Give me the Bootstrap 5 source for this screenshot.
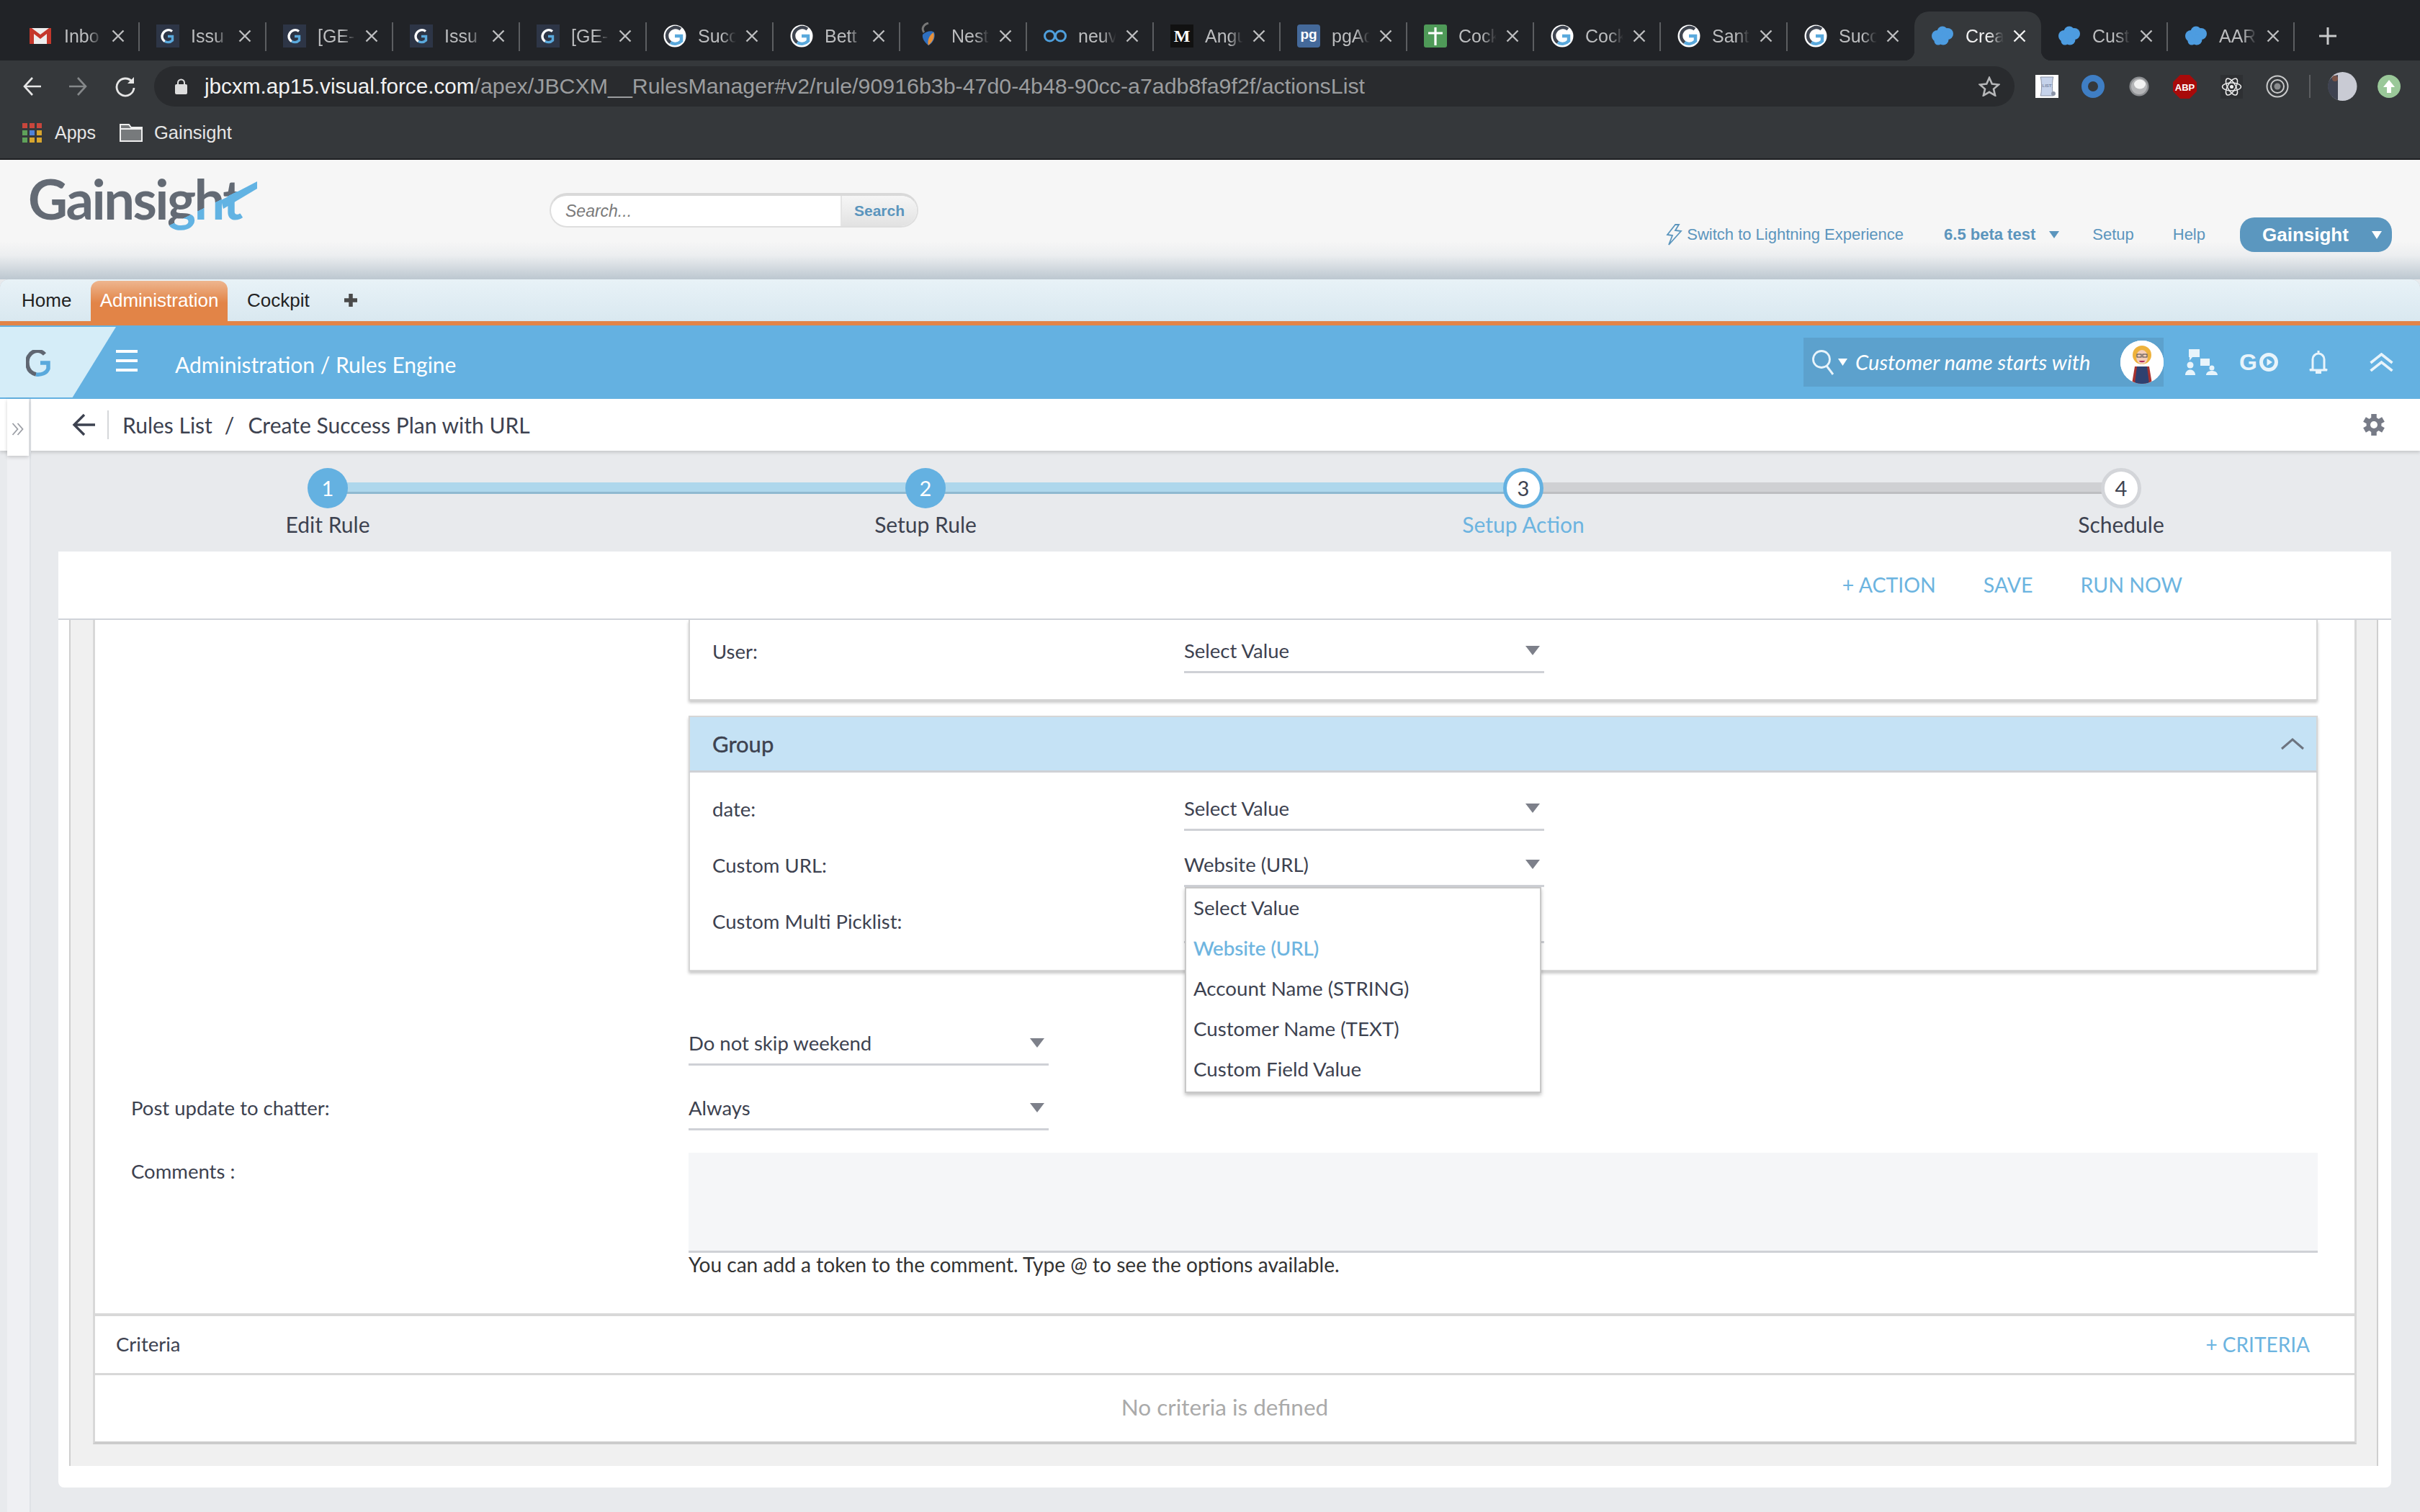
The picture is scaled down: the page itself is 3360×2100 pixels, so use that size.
<!DOCTYPE html>
<html lang="en">
<head>
<meta charset="utf-8">
<title>Create Success Plan with URL</title>
<link href="https://cdn.jsdelivr.net/npm/bootstrap@5.3.0/dist/css/bootstrap.min.css" rel="stylesheet">
<style>
html,body{margin:0;background:#e8eaed;}
body{width:3360px;height:2100px;overflow:hidden;font-family:Lato,"Liberation Sans",sans-serif;color:#3d4250;font-size:27.5px;line-height:36px;}
svg{display:block;flex:none;}
/* browser chrome */
.gs-tabs{height:84px;background:#212327;padding-left:18px;font-family:"Liberation Sans",sans-serif;}
.gs-tab{width:176px;height:68px;margin-top:16px;padding-left:23px;position:relative;color:#bcbdbf;font-size:25px;}
.gs-tab::after{content:"";position:absolute;right:0;top:15px;height:40px;width:2px;background:#5c5e61;}
.gs-tab.gs-nosep::after{display:none;}
.gs-tab.gs-active{background:#35383b;border-radius:20px 20px 0 0;color:#f1f1f1;}
.gs-tab.gs-active::before,.gs-tab.gs-active::after{content:"";display:block;position:absolute;top:auto;bottom:0;width:14px;height:14px;}
.gs-tab.gs-active::before{left:-14px;background:radial-gradient(circle at 0 0,transparent 14px,#35383b 14.5px);}
.gs-tab.gs-active::after{right:-14px;background:radial-gradient(circle at 100% 0,transparent 14px,#35383b 14.5px);}
.gs-tabtext{width:60px;margin-left:16px;white-space:nowrap;-webkit-mask-image:linear-gradient(90deg,#000 55%,transparent 88%);mask-image:linear-gradient(90deg,#000 55%,transparent 88%);}
.gs-tabx{margin-left:auto;margin-right:21px;}
.gs-plus{margin-left:33px;margin-top:16px;height:68px;}
.gs-tool{height:138px;background:#35383b;border-bottom:2px solid #1f2123;font-family:"Liberation Sans",sans-serif;}
.gs-navrow{height:64px;padding-top:8px;padding-left:32px;}
.gs-addr{position:absolute;left:214px;top:92px;width:2583px;height:56px;border-radius:28px;background:#292b2e;}
.gs-url{color:#9b9d9f;font-size:30.35px;white-space:nowrap;margin-left:24px;}
.gs-url b{font-weight:400;color:#f2f2f2;font-size:29.7px;}
.gs-bmarks{height:72px;padding-left:31px;color:#e6e6e6;font-size:25px;}
/* salesforce header */
.gs-head{height:166px;background:linear-gradient(#f6f6f6 68%,#eceef0 80%,#bcc7d0);padding:26px 39px 0;font-family:"Liberation Sans",sans-serif;}
.gs-logo{width:318px;height:72px;position:relative;font-family:Lato,"Liberation Sans",sans-serif;font-weight:700;font-size:76px;line-height:55px;letter-spacing:-2.6px;white-space:nowrap;color:transparent;background:linear-gradient(153.43deg,#636a74 70.6%,#62b3e3 70.6%);-webkit-background-clip:text;background-clip:text;}
.gs-swoosh{position:absolute;left:0;top:0;}
.gs-searchbox{margin-left:406px;margin-top:20px;width:512px;height:48px;border-radius:24px;border:2px solid #dedede;border-top:4px solid #d9d9d9;background:#fff;overflow:hidden;}
.gs-searchinput{flex:1;font-style:italic;color:#7a7a7a;font-size:23px;padding-left:20px;}
.gs-searchbtn{width:106px;height:100%;background:linear-gradient(#f6f6f6,#e2e2e2);border-left:2px solid #e4e4e4;color:#5b95bd;font-weight:700;font-size:21px;text-align:center;line-height:42px;}
.gs-links{margin-top:54px;height:48px;color:#5b95bd;font-size:22px;}
.gs-usr{width:211px;height:48px;background:#5b97bf;border-radius:20px;color:#fff;font-weight:700;font-size:26px;padding-left:31px;}
/* tab bar */
.gs-apptabs{height:64px;background:linear-gradient(#e8f2f7,#d9e8f0) top/100% 58px no-repeat;border-bottom:6px solid #e28447;border-radius:12px 12px 0 0;font-family:"Liberation Sans",sans-serif;font-size:26px;color:#222;background-color:#bcc7d0;}
.gs-home{width:126px;padding-left:30px;}
.gs-apptab{width:190px;height:56px;margin-top:2px;background:linear-gradient(#eeb68f,#e28447 55%);border-radius:12px 12px 0 0;color:#fff;text-align:center;line-height:54px;}
.gs-cock{margin-left:27px;}
.gs-add{margin-left:47px;}
/* blue bar */
.gs-bluebar{height:102px;background:#64b1e1;color:#fff;font-size:30px;}
.gs-para{width:161px;height:98px;margin-top:2px;background:#d5edf8;clip-path:polygon(0 0,100% 0,62.5% 100%,0 100%);padding:32px 0 0 36px;}
.gs-crumb{margin-left:52px;margin-top:6px;}
.gs-custbox{width:500px;height:68px;background:#5ca1cd;margin-top:0;font-style:italic;font-size:29.2px;}
.gs-avatar{border-radius:50%;background:#fff;overflow:hidden;}
/* subheader */
.gs-sub{height:72px;background:#fff;box-shadow:0 3px 4px rgba(0,0,0,.13);position:relative;z-index:2;padding-left:100px;padding-right:49px;font-size:30px;margin-bottom:2px;}
.gs-divider{width:2px;height:40px;background:#d5d7da;margin:0 19px 0 17px;}
.gs-rail{position:absolute;left:10px;top:554px;bottom:0;width:33px;background:#eff0f3;border-right:2px solid #dfe2e6;z-index:3;}
.gs-railtop{height:79px;width:30px;background:#fff;box-shadow:0 2px 5px rgba(0,0,0,.18);padding:33px 0 0 6px;}
/* stepper */
.gs-steps{height:138px;padding:22px 0 0 40px;}
.gs-step{width:830px;position:relative;text-align:center;}
.gs-step::before{content:"";position:absolute;left:415px;top:20px;width:830px;height:16px;background:#aed7ec;border-bottom:3px solid #8fb9d0;}
.gs-step.gs-todo::before{background:#cfd0d3;border-bottom-color:#bdbec1;}
.gs-step.gs-last::before{display:none;}
.gs-dot{width:56px;height:56px;border-radius:50%;margin:0 auto 4px;position:relative;background:#64b1e1;color:#fff;font-size:29px;line-height:56px;}
.gs-dot.gs-cur{background:#fff;border:5px solid #64b1e1;color:#3d4250;line-height:46px;}
.gs-dot.gs-next{background:#fff;border:5px solid #d3d5d9;color:#3d4250;line-height:46px;}
.gs-steplabel{font-size:30px;line-height:36px;}
/* main panel */
.gs-panel{margin:0 40px 0 81px;height:1300px;background:#fff;border-radius:0 0 8px 8px;}
.gs-actions{height:95px;border-bottom:2px solid #d0d3d9;padding-right:290px;padding-bottom:1px;gap:66px;color:#6cb4e0;font-size:28.5px;}
.gs-scroll{margin:0 18px 0 15px;height:1175px;background:#f0f0f0;border-left:2px solid #cfcfcf;border-right:2px solid #cfcfcf;padding:0 28px 0 31px;}
.gs-card{height:1145px;background:#fff;border-left:3px solid #d8d8d8;border-right:3px solid #d8d8d8;border-bottom:4px solid #cccccc;}
.gs-form{height:963px;padding-left:50px;padding-right:51px;display:grid;grid-template-columns:774px 1fr;grid-template-rows:562px 90px 88px 1fr;}
.gs-boxes{grid-column:2;}
.gs-box{border:2px solid #d6d6d6;border-top:0;box-shadow:0 3px 4px rgba(0,0,0,.22);background:#fff;padding:17px 0 15px 31px;}
.gs-row{height:78px;}
.gs-row>span{width:655px;padding-top:9px;}
.gs-sel{height:57px;border-bottom:3px solid #cfd1d6;position:relative;color:#3d4250;padding-top:8px;padding-right:6px;}
.gs-sel span{line-height:36px;}
.gs-w500{width:500px;}
.gs-grouphead{height:79px;background:#c5e2f5;border:2px solid #d6d6d6;border-bottom:3px solid #cfd1d6;padding:0 16px 0 31px;font-size:31px;-webkit-text-stroke:.4px #3d4250;}
.gs-group{margin-top:21px;box-shadow:0 3px 4px rgba(0,0,0,.22);}
.gs-groupbody{border:2px solid #d6d6d6;border-top:0;padding:24px 0 16px 31px;background:#fff;}
.gs-menu{position:absolute;left:1px;top:57px;width:495px;height:286px;background:#fff;border:2px solid #c8c8c8;box-shadow:0 3px 5px rgba(0,0,0,.25);z-index:5;padding:0;color:#3d4250;font-size:27.7px;}
.gs-menuitem{height:56px;line-height:54px;padding-left:10px;}
.gs-menuitem.gs-on{color:#6cb4e0;-webkit-text-stroke:.3px #6cb4e0;}
.gs-note{height:139px;background:#f5f6f8;border-bottom:3px solid #cfd1d6;}
.gs-hint{color:#333;font-size:28.1px;margin-top:-2px;}
.gs-lab{padding-top:8px;}
.gs-critrow{height:86px;border-top:4px solid #d8d8d8;border-bottom:3px solid #d8d8d8;padding:0 62px 2px 29px;}
.gs-critadd{color:#6cb4e0;font-size:28px;}
.gs-empty{height:92px;padding-bottom:5px;color:#aaa;font-size:31.5px;}
</style>
</head>
<body>
<svg width="0" height="0" style="position:absolute">
<defs>
<symbol id="i-x" viewBox="0 0 18 18"><path d="M1.500 1.500 16.500 16.500M16.500 1.500 1.500 16.500" stroke="currentColor" stroke-width="2.400" fill="none"/></symbol>
<symbol id="i-gsq" viewBox="0 0 32 32"><rect width="32" height="32" fill="#2d3546"/><path d="M22 9.500A9 10 0 0 0 8 16c0 3.500 1.500 6 4 7.500" fill="none" stroke="#fff" stroke-width="3.400"/><path d="M12 23.500c4 1.800 8 1 10.500-1.500V16.500H16" fill="none" stroke="#5aa9dc" stroke-width="3.400"/></symbol>
<symbol id="i-gro" viewBox="0 0 32 32"><circle cx="16" cy="16" r="15.500" fill="#fff"/><path d="M24 6.500A12 12 0 0 0 5 15c0 5 2 8 5 10" fill="none" stroke="#3f4550" stroke-width="4.500"/><path d="M10 25c5 3 11 2 15-2V16H16" fill="none" stroke="#5aa9dc" stroke-width="4.500"/></symbol>
<symbol id="i-sf" viewBox="0 0 32 32"><g fill="#4d9ce0"><circle cx="9" cy="16" r="8"/><circle cx="16" cy="10" r="7.500"/><circle cx="23" cy="13" r="8"/><circle cx="17" cy="21" r="7.500"/><circle cx="10" cy="23" r="5.500"/></g></symbol>
</defs>
</svg>

<!-- tab strip -->
<div class="gs-tabs d-flex">
 <div class="gs-tab d-flex align-items-center"><svg width="30" height="22" viewBox="0 0 30 22"><rect width="30" height="22" fill="#eee"/><path d="M0 0v22h6V8l9 7 9-7v14h6V0h-3L15 9 3 0z" fill="#c5382c"/></svg><span class="gs-tabtext" style="margin-left:18px">Inbo</span><svg class="gs-tabx" width="18" height="18"><use href="#i-x"/></svg></div>
 <div class="gs-tab d-flex align-items-center"><svg width="32" height="32"><use href="#i-gsq"/></svg><span class="gs-tabtext">Issu</span><svg class="gs-tabx" width="18" height="18"><use href="#i-x"/></svg></div>
 <div class="gs-tab d-flex align-items-center"><svg width="32" height="32"><use href="#i-gsq"/></svg><span class="gs-tabtext">[GE-</span><svg class="gs-tabx" width="18" height="18"><use href="#i-x"/></svg></div>
 <div class="gs-tab d-flex align-items-center"><svg width="32" height="32"><use href="#i-gsq"/></svg><span class="gs-tabtext">Issu</span><svg class="gs-tabx" width="18" height="18"><use href="#i-x"/></svg></div>
 <div class="gs-tab d-flex align-items-center"><svg width="32" height="32"><use href="#i-gsq"/></svg><span class="gs-tabtext">[GE-</span><svg class="gs-tabx" width="18" height="18"><use href="#i-x"/></svg></div>
 <div class="gs-tab d-flex align-items-center"><svg width="32" height="32"><use href="#i-gro"/></svg><span class="gs-tabtext">Succ</span><svg class="gs-tabx" width="18" height="18"><use href="#i-x"/></svg></div>
 <div class="gs-tab d-flex align-items-center"><svg width="32" height="32"><use href="#i-gro"/></svg><span class="gs-tabtext">Bett</span><svg class="gs-tabx" width="18" height="18"><use href="#i-x"/></svg></div>
 <div class="gs-tab d-flex align-items-center"><svg width="32" height="38" viewBox="0 0 32 38"><path d="M16 1c-7 2-10 8-6 13" fill="none" stroke="#777" stroke-width="3"/><path d="M8 17c5-5 13-6 16-3 2 5 0 14-8 18-5-4-9-9-8-15z" fill="#2e6fc0"/><path d="M23 14c2 6 0 12-7 18-2-6 1-14 7-18z" fill="#e8913a"/></svg><span class="gs-tabtext">Nest</span><svg class="gs-tabx" width="18" height="18"><use href="#i-x"/></svg></div>
 <div class="gs-tab d-flex align-items-center"><svg width="32" height="32" viewBox="0 0 32 32"><circle cx="8.500" cy="16" r="7" fill="none" stroke="#4f9fdc" stroke-width="3"/><circle cx="23.500" cy="16" r="7" fill="none" stroke="#4f9fdc" stroke-width="3"/></svg><span class="gs-tabtext">neuv</span><svg class="gs-tabx" width="18" height="18"><use href="#i-x"/></svg></div>
 <div class="gs-tab d-flex align-items-center"><svg width="32" height="32" viewBox="0 0 32 32"><rect width="32" height="32" fill="#111"/><text x="16" y="24" text-anchor="middle" font-family="Liberation Serif" font-weight="700" font-size="24" fill="#fff">M</text></svg><span class="gs-tabtext">Angu</span><svg class="gs-tabx" width="18" height="18"><use href="#i-x"/></svg></div>
 <div class="gs-tab d-flex align-items-center"><svg width="32" height="32" viewBox="0 0 32 32"><rect width="32" height="32" rx="4" fill="#44699a"/><text x="16" y="20" text-anchor="middle" font-family="Liberation Sans" font-weight="700" font-size="19" fill="#fff">pg</text></svg><span class="gs-tabtext">pgAd</span><svg class="gs-tabx" width="18" height="18"><use href="#i-x"/></svg></div>
 <div class="gs-tab d-flex align-items-center"><svg width="32" height="32" viewBox="0 0 32 32"><rect width="32" height="32" rx="3" fill="#4f9a58"/><path d="M16 4v25M6 12h20" stroke="#fff" stroke-width="3.200"/></svg><span class="gs-tabtext">Cock</span><svg class="gs-tabx" width="18" height="18"><use href="#i-x"/></svg></div>
 <div class="gs-tab d-flex align-items-center"><svg width="32" height="32"><use href="#i-gro"/></svg><span class="gs-tabtext">Cock</span><svg class="gs-tabx" width="18" height="18"><use href="#i-x"/></svg></div>
 <div class="gs-tab d-flex align-items-center"><svg width="32" height="32"><use href="#i-gro"/></svg><span class="gs-tabtext">Sant</span><svg class="gs-tabx" width="18" height="18"><use href="#i-x"/></svg></div>
 <div class="gs-tab gs-nosep d-flex align-items-center"><svg width="32" height="32"><use href="#i-gro"/></svg><span class="gs-tabtext">Succ</span><svg class="gs-tabx" width="18" height="18"><use href="#i-x"/></svg></div>
 <div class="gs-tab gs-active gs-nosep d-flex align-items-center"><svg width="32" height="32"><use href="#i-sf"/></svg><span class="gs-tabtext">Crea</span><svg class="gs-tabx" width="18" height="18"><use href="#i-x"/></svg></div>
 <div class="gs-tab d-flex align-items-center"><svg width="32" height="32"><use href="#i-sf"/></svg><span class="gs-tabtext">Cust</span><svg class="gs-tabx" width="18" height="18"><use href="#i-x"/></svg></div>
 <div class="gs-tab d-flex align-items-center"><svg width="32" height="32"><use href="#i-sf"/></svg><span class="gs-tabtext">AAR</span><svg class="gs-tabx" width="18" height="18"><use href="#i-x"/></svg></div>
 <div class="gs-plus d-flex align-items-center"><svg width="26" height="26" viewBox="0 0 26 26"><path d="M13 1v24M1 13h24" stroke="#c9cacb" stroke-width="3"/></svg></div>
</div>

<!-- toolbar -->
<div class="gs-tool">
 <div class="gs-navrow d-flex align-items-center gap-0">
  <svg width="26" height="28" viewBox="0 0 26 28"><path d="M25 14H3M13 2 2 14l11 12" fill="none" stroke="#e6e6e6" stroke-width="2.600"/></svg>
  <svg style="margin-left:37px" width="26" height="28" viewBox="0 0 26 28"><path d="M1 14h22M13 2l11 12-11 12" fill="none" stroke="#85888a" stroke-width="2.600"/></svg>
  <svg style="margin-left:39px" width="28" height="30" viewBox="0 0 28 30"><path d="M23 8a12 12 0 1 0 3 9" fill="none" stroke="#e6e6e6" stroke-width="2.800"/><path d="M26 2v9h-9z" fill="#e6e6e6"/></svg>
 </div>
 <div class="gs-addr d-flex align-items-center" style="padding-left:29px">
  <svg width="17" height="22" viewBox="0 0 17 22"><path d="M4 9V6a4.500 4.500 0 0 1 9 0v3" fill="none" stroke="#ddd" stroke-width="2"/><rect y="8" width="17" height="14" rx="2" fill="#ddd"/></svg>
  <span class="gs-url"><b>jbcxm.ap15.visual.force.com</b>/apex/JBCXM__RulesManager#v2/rule/90916b3b-47d0-4b48-90cc-a7adb8fa9f2f/actionsList</span>
  <svg class="ms-auto" style="margin-right:20px" width="30" height="28" viewBox="0 0 30 28"><path d="M15 2l3.800 8.600 9.200.9-7 6.100 2.100 9L15 21.800 6.900 26.600l2.100-9-7-6.100 9.200-.9z" fill="none" stroke="#b5b6b8" stroke-width="2.600"/></svg>
 </div>
 <div class="gs-exts d-flex align-items-center" style="position:absolute;left:2826px;top:100px;height:40px">
  <svg width="32" height="32" viewBox="0 0 32 32"><rect width="32" height="32" fill="#fff"/><path d="M7 3h18c-2 3-2 22 0 26H7C9 25 9 7 7 3z" fill="#c5d2ea" stroke="#8a93a6"/><circle cx="25" cy="26" r="3" fill="#8a93a6"/><text x="16" y="17" text-anchor="middle" font-size="6" font-weight="700" font-family="Liberation Sans" fill="#7a86a0">LIST</text></svg>
  <svg style="margin-left:32px" width="32" height="32" viewBox="0 0 32 32"><circle cx="16" cy="16" r="11.500" fill="none" stroke="#3f7ec4" stroke-width="9"/></svg>
  <svg style="margin-left:34px" width="28" height="28" viewBox="0 0 28 28"><circle cx="14" cy="14" r="13.500" fill="#8d8f92"/><circle cx="14" cy="14" r="11" fill="#b5b6b8"/><ellipse cx="15" cy="11" rx="8" ry="6.500" fill="#f2f2f2"/></svg>
  <svg style="margin-left:33px" width="33" height="33" viewBox="0 0 33 33"><path d="M10 0h13l10 10v13L23 33H10L0 23V10z" fill="#a80a0a"/><text x="16.500" y="21.500" text-anchor="middle" font-size="13" font-weight="700" font-family="Liberation Sans" fill="#fff">ABP</text></svg>
  <svg style="margin-left:33px" width="31" height="33" viewBox="0 0 31 33"><rect width="31" height="33" fill="#2e3033"/><g fill="none" stroke="#eee" stroke-width="1.500"><ellipse cx="15.500" cy="16.500" rx="13" ry="5.500"/><ellipse cx="15.500" cy="16.500" rx="13" ry="5.500" transform="rotate(60 15.500 16.500)"/><ellipse cx="15.500" cy="16.500" rx="13" ry="5.500" transform="rotate(120 15.500 16.500)"/></g><circle cx="15.500" cy="16.500" r="2.500" fill="#eee"/></svg>
  <svg style="margin-left:32px" width="32" height="32" viewBox="0 0 32 32"><g fill="none" stroke="#c9cacb"><circle cx="16" cy="16" r="14.500" stroke-width="2"/><circle cx="16" cy="16" r="9" stroke-width="2"/></g><circle cx="16" cy="16" r="4.500" fill="#8a8c8e"/></svg>
  <span style="width:2px;height:32px;background:#5c5e61;margin-left:28px"></span>
  <svg style="margin-left:24px" width="41" height="40" viewBox="0 0 41 40"><circle cx="20.500" cy="20" r="20" fill="#c9cbd4"/><path d="M0 20A20 20 0 0 0 14 39V4C5 5 0 12 0 20z" fill="#3e4250"/><circle cx="10" cy="9" r="4" fill="#7a5246"/></svg>
  <svg style="margin-left:28px" width="32" height="32" viewBox="0 0 32 32"><circle cx="16" cy="16" r="16" fill="#9ac899"/><path d="M16 7l8 10h-5v8h-6v-8H8z" fill="#fff"/></svg>
 </div>
 <div class="gs-bmarks d-flex align-items-center">
  <svg width="27" height="27" viewBox="0 0 27 27"><g fill="#c8463c"><rect width="7" height="7"/><rect x="10" width="7" height="7"/><rect x="20" width="7" height="7"/></g><g fill="#d7a52e"><rect y="10" width="7" height="7" fill="#5fa25a"/><rect x="10" y="10" width="7" height="7" fill="#4f82d8"/><rect x="20" y="10" width="7" height="7"/><rect y="20" width="7" height="7" fill="#5fa25a"/><rect x="10" y="20" width="7" height="7"/><rect x="20" y="20" width="7" height="7"/></g></svg>
  <span style="margin-left:18px">Apps</span>
  <svg style="margin-left:33px" width="32" height="25" viewBox="0 0 32 25"><path d="M1 24V1h12l3 4h15v19z" fill="#777a7c" stroke="#eee" stroke-width="2"/><path d="M1 7h30" stroke="#eee" stroke-width="2"/></svg>
  <span style="margin-left:16px;font-size:25.5px">Gainsight</span>
 </div>
</div>

<!-- org header -->
<div class="gs-head d-flex align-items-start">
 <div class="gs-logo">Gainsight<svg class="gs-swoosh" width="318" height="72" viewBox="0 0 318 72"><path d="M268 30 318 4V14L271 42z" fill="#62b3e3"/></svg></div>
 <div class="gs-searchbox d-flex align-items-center"><span class="gs-searchinput">Search...</span><span class="gs-searchbtn">Search</span></div>
 <div class="gs-links ms-auto d-flex align-items-center">
  <svg width="24" height="30" viewBox="0 0 24 30"><path d="M14 1 3 15l7 1-5 13 17-19-8-1 5-8z" fill="none" stroke="#5b95bd" stroke-width="1.800"/></svg>
  <span style="margin-left:6px">Switch to Lightning Experience</span>
  <b style="margin-left:56px">6.5 beta test</b>
  <svg style="margin-left:19px" width="14" height="10" viewBox="0 0 14 10"><path d="M0 0h14L7 10z" fill="#5b95bd"/></svg>
  <span style="margin-left:46px">Setup</span>
  <span style="margin-left:54px">Help</span>
  <div class="gs-usr d-flex align-items-center" style="margin-left:48px"><span>Gainsight</span><svg style="margin-left:32px" width="14" height="11" viewBox="0 0 14 11"><path d="M0 0h14L7 11z" fill="#fff"/></svg></div>
 </div>
</div>

<!-- app tabs -->
<div class="gs-apptabs d-flex align-items-start">
 <div class="gs-home" style="line-height:58px">Home</div>
 <div class="gs-apptab">Administration</div>
 <div class="gs-cock" style="line-height:58px">Cockpit</div>
 <svg class="gs-add" style="margin-top:19px" width="20" height="20" viewBox="0 0 20 20"><path d="M10 1v18M1 10h18" stroke="#4a4a4a" stroke-width="5.500"/></svg>
</div>

<!-- blue bar -->
<div class="gs-bluebar d-flex align-items-center">
 <div class="gs-para align-self-start"><svg width="35" height="37" viewBox="0 0 35 37"><path d="M26 6A14 15 0 0 0 2 18c0 8 4 14 12 16" fill="none" stroke="#5f6671" stroke-width="5.500"/><path d="M14 34c8 1 15-2 17-8V18H20" fill="none" stroke="#5aa9dc" stroke-width="5.500"/></svg></div>
 <svg style="margin-top:-4px" width="30" height="30" viewBox="0 0 30 30"><path d="M0 2h30M0 15h30M0 28h30" stroke="#fff" stroke-width="4"/></svg>
 <div class="gs-crumb">Administration&nbsp;/&nbsp;Rules Engine</div>
 <div class="gs-custbox ms-auto d-flex align-items-center">
  <svg style="margin-left:11px" width="32" height="36" viewBox="0 0 32 36"><circle cx="14" cy="14" r="11.500" fill="none" stroke="#e8f4fb" stroke-width="2.800"/><path d="M21 23l9 12" stroke="#e8f4fb" stroke-width="3"/></svg>
  <svg style="margin-left:5px" width="13" height="10" viewBox="0 0 13 10"><path d="M0 0h13L6.500 10z" fill="#fff"/></svg>
  <span style="margin-left:11px">Customer name starts with</span>
  <svg class="gs-avatar ms-auto" width="60" height="60" viewBox="0 0 60 60"><rect width="60" height="60" fill="#fff"/><path d="M16 60l4-24h20l4 24z" fill="#a8322f"/><path d="M20 60l3-24h14l3 24z" fill="#2f4170"/><circle cx="30" cy="20" r="13" fill="#eeb23c"/><ellipse cx="30" cy="23" rx="8" ry="10" fill="#f4cdb8"/><rect x="23" y="19" width="6" height="4" fill="none" stroke="#444"/><rect x="31" y="19" width="6" height="4" fill="none" stroke="#444"/><path d="M26 28h8c0 3-8 3-8 0z" fill="#b02a5a"/></svg>
 </div>
 <svg style="margin-left:30px" width="45" height="36" viewBox="0 0 45 36" fill="#e8f4fb"><path d="M5 0h15v11H10l-4 5V11H5z"/><path d="M21 13h13v10H21z"/><circle cx="7" cy="22" r="4.500"/><path d="M0 36c0-10 14-10 14 0z"/><circle cx="37" cy="26" r="3.500"/><path d="M29 36c0-8 16-8 16 0z"/></svg>
 <svg style="margin-left:31px" width="53" height="32" viewBox="0 0 53 32"><text x="-1" y="27" font-family="Liberation Sans" font-weight="700" font-size="32" fill="#e8f4fb">G</text><circle cx="40" cy="16" r="10.500" fill="none" stroke="#e8f4fb" stroke-width="5"/><path d="M37.500 11l7.500 5-7.500 5z" fill="#e8f4fb"/></svg>
 <svg style="margin-left:41px" width="30" height="34" viewBox="0 0 30 34"><path d="M15 1v3M7 26V13a8 8 0 0 1 16 0v13l4 2H3z" fill="none" stroke="#e8f4fb" stroke-width="3"/><path d="M11 31h8" stroke="#e8f4fb" stroke-width="4"/></svg>
 <svg style="margin-left:56px;margin-right:37px" width="33" height="26" viewBox="0 0 33 26"><path d="M1.500 14 16.500 2l15 12M1.500 25 16.500 13l15 12" fill="none" stroke="#e8f4fb" stroke-width="3.600"/></svg>
</div>

<!-- subheader -->
<div class="gs-sub d-flex align-items-center">
 <svg width="32" height="32" viewBox="0 0 32 32"><path d="M32 16H4M17 2 3 16l14 14" fill="none" stroke="#3d4250" stroke-width="3.400"/></svg>
 <span class="gs-divider"></span>
 <span>Rules List</span><span style="margin-left:17px">/</span><span style="margin-left:19px">Create Success Plan with URL</span>
 <svg class="ms-auto" width="30" height="32" viewBox="0 0 30 32"><g stroke="#777b87" stroke-width="7.500"><path d="M15 1v30M2 8.500l26 15M28 8.500l-26 15"/></g><circle cx="15" cy="16" r="10.500" fill="#777b87"/><circle cx="15" cy="16" r="5" fill="#fff"/></svg>
</div>
<div class="gs-rail">
 <div class="gs-railtop"><svg width="18" height="18" viewBox="0 0 18 18"><path d="M1.500 1 8.500 9l-7 8M8.500 1l7 8-7 8" fill="none" stroke="#9b9ea5" stroke-width="1.800"/></svg></div>
</div>

<!-- stepper -->
<div class="gs-steps d-flex align-items-start">
 <div class="gs-step"><div class="gs-dot">1</div><div class="gs-steplabel">Edit Rule</div></div>
 <div class="gs-step"><div class="gs-dot">2</div><div class="gs-steplabel">Setup Rule</div></div>
 <div class="gs-step gs-todo"><div class="gs-dot gs-cur">3</div><div class="gs-steplabel" style="color:#6cb4e0">Setup Action</div></div>
 <div class="gs-step gs-last"><div class="gs-dot gs-next">4</div><div class="gs-steplabel">Schedule</div></div>
</div>

<!-- panel -->
<div class="gs-panel">
 <div class="gs-actions d-flex align-items-center justify-content-end"><span>+ ACTION</span><span>SAVE</span><span>RUN NOW</span></div>
 <div class="gs-scroll">
  <div class="gs-card">
   <div class="gs-form">
    <div class="gs-boxes">
     <div class="gs-box">
      <div class="gs-row d-flex"><span>User:</span><div class="gs-sel gs-w500 d-flex justify-content-between"><span>Select Value</span><svg style="margin-top:11px" width="20" height="13" viewBox="0 0 20 13"><path d="M0 0h20L10 13z" fill="#7d808a"/></svg></div></div>
     </div>
     <div class="gs-group">
      <div class="gs-grouphead d-flex align-items-center justify-content-between"><span>Group</span><svg width="34" height="18" viewBox="0 0 34 18"><path d="M2 16 17 3l15 13" fill="none" stroke="#6d7480" stroke-width="3"/></svg></div>
      <div class="gs-groupbody">
       <div class="gs-row d-flex"><span>date:</span><div class="gs-sel gs-w500 d-flex justify-content-between"><span>Select Value</span><svg style="margin-top:11px" width="20" height="13" viewBox="0 0 20 13"><path d="M0 0h20L10 13z" fill="#7d808a"/></svg></div></div>
       <div class="gs-row d-flex"><span>Custom URL:</span><div class="gs-sel gs-w500 d-flex justify-content-between"><span>Website (URL)</span><svg style="margin-top:11px" width="20" height="13" viewBox="0 0 20 13"><path d="M0 0h20L10 13z" fill="#7d808a"/></svg>
        <div class="gs-menu"><div class="gs-menuitem">Select Value</div><div class="gs-menuitem gs-on">Website (URL)</div><div class="gs-menuitem">Account Name (STRING)</div><div class="gs-menuitem">Customer Name (TEXT)</div><div class="gs-menuitem">Custom Field Value</div></div>
       </div></div>
       <div class="gs-row d-flex"><span>Custom Multi Picklist:</span><div class="gs-sel gs-w500"></div></div>
      </div>
     </div>
    </div>
    <div></div>
    <div class="gs-sel gs-w500 d-flex justify-content-between"><span>Do not skip weekend</span><svg style="margin-top:11px" width="20" height="13" viewBox="0 0 20 13"><path d="M0 0h20L10 13z" fill="#7d808a"/></svg></div>
    <div class="gs-lab">Post update to chatter:</div>
    <div class="gs-sel gs-w500 d-flex justify-content-between"><span>Always</span><svg style="margin-top:11px" width="20" height="13" viewBox="0 0 20 13"><path d="M0 0h20L10 13z" fill="#7d808a"/></svg></div>
    <div class="gs-lab">Comments :</div>
    <div><div class="gs-note"></div><div class="gs-hint">You can add a token to the comment. Type @ to see the options available.</div></div>
   </div>
   <div class="gs-critrow d-flex align-items-center justify-content-between"><span>Criteria</span><span class="gs-critadd">+ CRITERIA</span></div>
   <div class="gs-empty d-flex align-items-center justify-content-center">No criteria is defined</div>
  </div>
 </div>
</div>
</body>
</html>
